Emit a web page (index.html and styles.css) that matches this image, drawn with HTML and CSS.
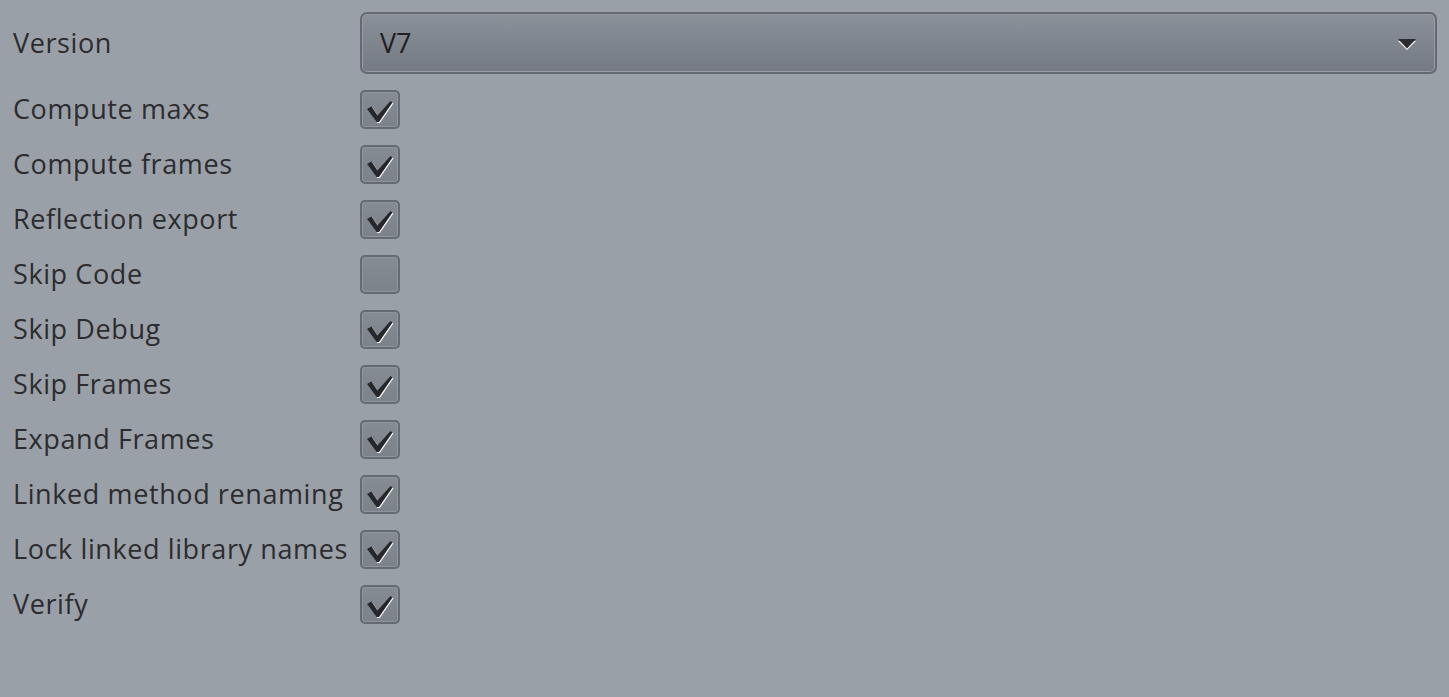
FILE: index.html
```html
<!DOCTYPE html>
<html>
<head>
<meta charset="utf-8">
<link rel="stylesheet" href="styles.css">
</head>
<body>
<div class="form">
  <div class="label">Version</div>
  <div class="select">
    <span class="select-value">V7</span>
    <svg class="arrow" width="20" height="12" viewBox="0 0 20 12"><path d="M1 2 L19 2 L10 11 Z" fill="#f2f3f5"/><path d="M1 0 L19 0 L10 9.5 Z" fill="#2a2c30"/></svg>
  </div>

  <div class="label">Compute maxs</div>
  <div class="cell"><span class="check on"></span></div>
  <div class="label">Compute frames</div>
  <div class="cell"><span class="check on"></span></div>
  <div class="label">Reflection export</div>
  <div class="cell"><span class="check on"></span></div>
  <div class="label">Skip Code</div>
  <div class="cell"><span class="check"></span></div>
  <div class="label">Skip Debug</div>
  <div class="cell"><span class="check on"></span></div>
  <div class="label">Skip Frames</div>
  <div class="cell"><span class="check on"></span></div>
  <div class="label">Expand Frames</div>
  <div class="cell"><span class="check on"></span></div>
  <div class="label">Linked method renaming</div>
  <div class="cell"><span class="check on"></span></div>
  <div class="label">Lock linked library names</div>
  <div class="cell"><span class="check on"></span></div>
  <div class="label">Verify</div>
  <div class="cell"><span class="check on"></span></div>
</div>
<script>
document.querySelectorAll('.check.on').forEach(function (el) {
  var d = 'M5 17 L9.5 14.5 L15.5 23.5 L28.5 9 L30.5 10.5 L17 30 L14.5 30 Z';
  el.innerHTML = '<svg width="36" height="35" viewBox="0 0 36 35"><path d="' + d + '" fill="#f4f5f7" transform="translate(0.9,1.1)"/><path d="' + d + '" fill="#25272b"/></svg>';
});
</script>
</body>
</html>
```

FILE: styles.css
```css
html, body {
  margin: 0;
  padding: 0;
  background: #9aa0a8;
  height: 100%;
}
body {
  font-family: "Open Sans", "Noto Sans", "DejaVu Sans", sans-serif;
  font-size: 27px;
  letter-spacing: 0.6px;
  color: #2c2c2e;
}
.form {
  display: grid;
  grid-template-columns: 347px 1fr;
  row-gap: 15px;
  padding: 12px 12px 0 13px;
  align-items: center;
}
.label {
  white-space: nowrap;
  line-height: 40px;
}
.select {
  height: 58px;
  margin-bottom: 0;
  border: 2px solid #646a72;
  border-radius: 7px;
  background: linear-gradient(#8b9199, #747a83);
  box-shadow: inset 0 0 0 1px #979ca4;
  display: flex;
  align-items: center;
  justify-content: space-between;
  padding: 0 18px 0 18px;
}
.select-value {
  color: #1f2024;
  padding-bottom: 2px;
  letter-spacing: 0;
}
.arrow {
  display: block;
  margin-top: 4px;
}
.cell {
  display: flex;
  align-items: center;
}
.check {
  width: 36px;
  height: 35px;
  border: 2px solid #656b73;
  border-radius: 5px;
  background: linear-gradient(#868c94, #7c828a);
  box-shadow: inset 0 0 0 1px #8f959d;
  display: flex;
}
.check svg {
  display: block;
}
```
